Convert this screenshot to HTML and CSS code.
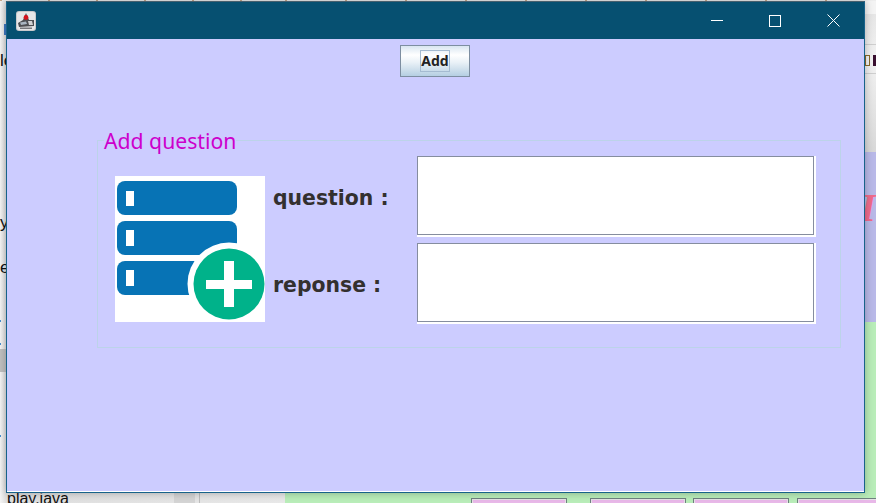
FILE: index.html
```html
<!DOCTYPE html>
<html lang="en">
<head>
<meta charset="utf-8">
<title>Add question</title>
<link rel="stylesheet" href="styles.css">
</head>
<body>
<div class="desktop">
  <div class="side">
    <span class="frag frag-lo">lc</span>
    <span class="frag frag-y">y</span>
    <span class="frag frag-e">e</span>
    <div class="side-band"></div>
    <span class="frag frag-play">play.java</span>
  </div>
  <div class="main">
    <div class="toolbar">
      <div class="tool-row tool-row-icon"><span class="clip-icon"></span><span class="clip-mark"></span></div>
      <div class="tool-row"></div>
    </div>
    <div class="hero"><span class="hero-text">I</span></div>
    <div class="board">
      <div class="pink-row">
        <span class="pink pink-a"></span>
        <span class="pink pink-b"></span>
        <span class="pink pink-c"></span>
        <span class="pink pink-d"></span>
      </div>
    </div>
  </div>

  <div class="window">
    <header class="titlebar">
      <svg class="app-icon" width="20" height="20" viewBox="0 0 20 20">
        <rect width="20" height="20" rx="3" fill="#c9c9cc"/>
        <rect x="1" y="1" width="18" height="18" rx="2" fill="#e6e6e8"/>
        <path d="M2 12 L7 9 L10 2 L13 9 L18 9 L18 15 L3 16 Z" fill="#4d4e52"/>
        <path d="M4 11.5 L10 10.5 L11 13 L5 14 Z" fill="#aab6c2"/>
        <path d="M12 10 L16 10 L17 14 L13 14 Z" fill="#d2d2d4"/>
        <rect x="4" y="16.5" width="12" height="1.5" fill="#77787c"/>
        <circle cx="10" cy="6.5" r="2.4" fill="#d3121e"/>
      </svg>
      <div class="controls">
        <svg class="ctl ctl-min" width="12" height="12" viewBox="0 0 12 12"><path d="M0 5.5H12" stroke="#fff" fill="none"/></svg>
        <svg class="ctl ctl-max" width="12" height="12" viewBox="0 0 12 12"><rect x=".5" y=".5" width="11" height="11" stroke="#fff" fill="none"/></svg>
        <svg class="ctl ctl-close" width="13" height="13" viewBox="0 0 13 13"><path d="M.5 .5L12.5 12.5M12.5 .5L.5 12.5" stroke="#fff" fill="none"/></svg>
      </div>
    </header>
    <div class="content">
      <button class="add-btn" type="button"><span class="add-label">Add</span></button>
      <fieldset class="group">
        <legend class="group-title">Add question</legend>
        <div class="form-grid">
          <svg class="db-icon" width="150" height="146" viewBox="0 0 150 146">
            <rect width="150" height="146" fill="#fff"/>
            <rect x="2" y="5" width="120" height="34" rx="8" fill="#0773b5"/>
            <rect x="2" y="45" width="120" height="34" rx="8" fill="#0773b5"/>
            <rect x="2" y="85" width="120" height="34" rx="8" fill="#0773b5"/>
            <rect x="11" y="15" width="8" height="15" fill="#fff"/>
            <rect x="11" y="54" width="8" height="16" fill="#fff"/>
            <rect x="11" y="94" width="8" height="16" fill="#fff"/>
            <circle cx="114" cy="108" r="41.5" fill="#fff"/>
            <circle cx="114" cy="108" r="35.5" fill="#00b28a"/>
            <path d="M109 85H119V104H137V113H119V131H109V113H91V104H109Z" fill="#fff"/>
          </svg>
          <label class="field-label" for="q">question :</label>
          <textarea class="field" id="q"></textarea>
          <label class="field-label" for="r">reponse :</label>
          <textarea class="field" id="r"></textarea>
        </div>
      </fieldset>
    </div>
  </div>
</div>
</body>
</html>
```
FILE: styles.css
```css
* { box-sizing: border-box; }
html, body { margin: 0; padding: 0; height: 100%; overflow: hidden; }
body { font-family: "DejaVu Sans", sans-serif; }

.desktop {
  position: relative;
  width: 876px;
  height: 503px;
  display: grid;
  grid-template-columns: 285px 1fr;
  grid-template-rows: 503px;
  overflow: hidden;
}

/* Background application, mostly hidden by the dialog */
.side {
  display: flex;
  flex-direction: column;
  overflow: hidden;
  color: #111;
  font: 17px/16px "Liberation Sans", sans-serif;
  background:
    repeating-linear-gradient(90deg, #c9a98a 0 2px, #eeeeee 2px 48px) 0 0 / 100% 1px no-repeat,
    linear-gradient(#3f78c0, #3f78c0) 4px 24px / 2px 11px no-repeat,
    linear-gradient(#4a90d0, #4a90d0) 0 320px / 1px 2px no-repeat,
    linear-gradient(#4a90d0, #4a90d0) 0 343px / 1px 2px no-repeat,
    linear-gradient(#4a90d0, #4a90d0) 0 435px / 1px 2px no-repeat,
    linear-gradient(#d4d4d4, #d4d4d4) 174px 492px / 21px 11px no-repeat,
    linear-gradient(#bdbdbd, #bdbdbd) 199px 492px / 1px 11px no-repeat,
    linear-gradient(90deg, #f5f5f5, #dedede 6px, #e8e8e8);
}
.frag { display: block; flex: none; height: 16px; }
.frag-lo { margin-top: 53px; }
.frag-y { margin-top: 146px; }
.frag-e { margin-top: 29px; }
.side-band { flex: none; height: 23px; margin-top: 73px; width: 6px; background: #c0c0c0; }
.frag-play { margin: 119px 0 0 7px; font-size: 16px; white-space: nowrap; }

.main { display: grid; grid-template-rows: 152px 170px 1fr; height: 503px; }
.toolbar {
  display: flex;
  flex-direction: column;
  padding-top: 44px;
  background:
    repeating-linear-gradient(90deg, #c9a98a 0 2px, #eeeeee 2px 60px) 0 0 / 100% 1px no-repeat,
    linear-gradient(180deg, #f4f4f4 0 14px, #e6e6e6 14px, #f2f2f2 40%, #d8d8d8);
}
.tool-row {
  height: 29px;
  border-top: 1px solid #cfcfcf;
  display: flex;
  justify-content: flex-end;
  align-items: center;
  gap: 3px;
}
.clip-icon { width: 5px; height: 11px; border: 1px solid #8a6a2a; }
.clip-mark { width: 3px; height: 11px; background: #3a1030; }
.tool-row-icon { padding-top: 2px; }
.hero {
  background: #b9b9e8;
  display: flex;
  justify-content: flex-end;
  overflow: hidden;
  padding-top: 31px;
}
.hero-text {
  font: italic bold 41px/48px "Liberation Serif", serif;
  color: #ef6b8c;
}
.board {
  background: #b9edb9;
  display: flex;
  flex-direction: column;
  justify-content: flex-end;
  overflow: hidden;
}
.pink-row { display: flex; flex: none; height: 5px; padding-left: 186px; }
.pink {
  height: 8px;
  width: 96px;
  flex: none;
  background: #e8b8e8;
  border: 1px solid #6f8080;
  box-shadow: inset 0 0 0 1px #e4e4e4;
}
.pink-b { margin-left: 23px; }
.pink-c { margin-left: 7px; }
.pink-d { margin-left: 8px; }

/* Dialog window */
.window {
  position: absolute;
  left: 6px;
  top: 1px;
  width: 859px;
  height: 492px;
  display: flex;
  flex-direction: column;
  border: 1px solid #17628a;
  border-top-color: #47606e;
  box-shadow: 0 0 8px rgba(0, 0, 0, .28);
  background: #ccccff;
}
.titlebar {
  flex: none;
  height: 37px;
  background: #065071;
  display: flex;
  align-items: center;
  justify-content: space-between;
  padding-left: 9px;
}
.app-icon { display: block; }
.controls { display: flex; align-items: center; }
.ctl { display: block; flex: none; }
.ctl-min { margin-right: 46px; }
.ctl-max { margin-right: 46px; }
.ctl-close { margin-right: 24px; }

.content {
  flex: 1;
  display: flex;
  flex-direction: column;
  align-items: flex-start;
  border-bottom: 1px solid #fff;
}
.add-btn {
  margin: 6px 0 0 393px;
  width: 70px;
  height: 32px;
  padding: 0;
  display: flex;
  align-items: center;
  justify-content: center;
  border: 1px solid #7d8ea1;
  background: linear-gradient(180deg, #d9e6f1 0%, #ffffff 30%, #e9f1f7 55%, #b5cfe2 100%);
}
.add-label {
  display: block;
  width: 30px;
  height: 22px;
  border: 1px solid #a5bbd1;
  font: bold 14px/20px "Noto Sans", sans-serif;
  color: #222;
  text-align: center;
}

.group {
  margin: 50px 0 0 90px;
  padding: 0;
  width: 744px;
  height: 221px;
  border: 1px solid #bcd3e9;
  min-width: 0;
}
.group-title {
  margin-left: 6px;
  padding: 2px 0 0;
  font: 21.2px/24px "Noto Sans", sans-serif;
  color: #cc00cc;
}
.form-grid {
  display: grid;
  grid-template-columns: 150px 152px 397px;
  grid-template-rows: 79px 79px;
  row-gap: 8px;
  padding: 3px 0 0 17px;
}
.db-icon { grid-row: 1 / span 2; grid-column: 1; align-self: end; display: block; }
.field-label {
  padding: 4px 0 0 8px;
  align-self: center;
  font: bold 20.4px/24px "DejaVu Sans", sans-serif;
  color: #33302f;
  white-space: nowrap;
}
.field {
  display: block;
  width: 397px;
  height: 79px;
  margin: 0;
  padding: 0;
  resize: none;
  background: #fff;
  border: 1px solid #858d9f;
  box-shadow: 1px 1px 0 1px #fff;
  outline: none;
}
```
